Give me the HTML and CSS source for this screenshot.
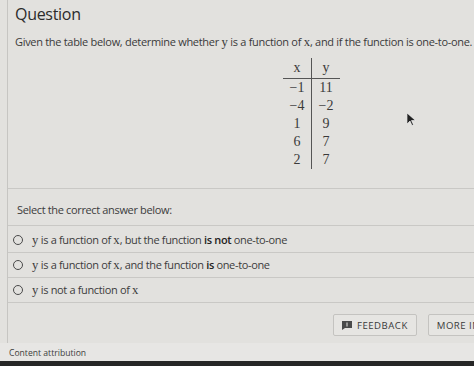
FILE: index.html
```html
<!DOCTYPE html>
<html lang="en">
<head>
    <meta charset="UTF-8">
    <title>Question</title>
    <link rel="stylesheet" href="styles.css">
</head>
<body>
    <div class="frame">
        <h1 class="title">Question</h1>
        <p class="prompt">Given the table below, determine whether <span class="math">y</span> is a function of <span class="math">x</span>, and if the function is one-to-one.</p>

        <div class="table-wrap">
            <table class="values">
                <tr><th>x</th><th>y</th></tr>
                <tr><td>&minus;1</td><td>11</td></tr>
                <tr><td>&minus;4</td><td>&minus;2</td></tr>
                <tr><td>1</td><td>9</td></tr>
                <tr><td>6</td><td>7</td></tr>
                <tr><td>2</td><td>7</td></tr>
            </table>
        </div>

        <div class="answers">
            <p class="select">Select the correct answer below:</p>
            <label class="option"><span class="radio"></span><span><span class="math">y</span> is a function of <span class="math">x</span>, but the function <b>is not</b> one-to-one</span></label>
            <label class="option"><span class="radio"></span><span><span class="math">y</span> is a function of <span class="math">x</span>, and the function <b>is</b> one-to-one</span></label>
            <label class="option"><span class="radio"></span><span><span class="math">y</span> is not a function of <span class="math">x</span></span></label>
        </div>

        <div class="actions">
            <button class="btn">
                <svg width="10" height="9" viewBox="0 0 10 9"><path d="M0 0h10v7H3L0 9z" fill="#4a4a4a"/><rect x="4.5" y="1.5" width="1" height="4" fill="#e6e5e2"/></svg>
                FEEDBACK
            </button>
            <button class="btn">MORE INFO</button>
        </div>
    </div>
    <footer class="attribution">Content attribution</footer>
    <div class="screen-edge"></div>

    <svg class="cursor" width="9" height="13" viewBox="0 0 9 13"><path d="M0 0v11l3-3 2 4.5 1.5-.7-2-4.3H8.5z" fill="#222" stroke="#fff" stroke-width=".6"/></svg>
</body>
</html>
```

FILE: styles.css
```css
body {
    margin: 0;
    width: 474px;
    height: 366px;
    overflow: hidden;
    background-color: #e2e1de;
    font-family: 'Open Sans', sans-serif;
    color: #333;
    position: relative;
}

.frame {
    margin-left: 7px;
    border-left: 1px solid #c6c5c2;
    height: 343px;
    width: 520px;
}

.title {
    margin: 0;
    padding: 3px 0 0 7px;
    font-size: 16px;
    font-weight: 400;
    letter-spacing: -0.3px;
    line-height: 22px;
    color: #2b2b2b;
}

.prompt {
    margin: 9px 0 0 7px;
    font-size: 11px;
    letter-spacing: -0.3px;
    line-height: 16px;
    white-space: nowrap;
    color: #3a3a3a;
}

.math {
    font-family: 'Liberation Serif', serif;
    font-size: 1.15em;
    letter-spacing: 0;
}

.table-wrap {
    padding: 8px 0 0 275px;
    height: 130px;
    border-bottom: 1px solid #c9c8c5;
}

.values {
    border-collapse: collapse;
    font-family: 'Liberation Serif', serif;
    font-size: 14px;
    color: #3a3a3a;
}

.values th {
    font-weight: 400;
    height: 20px;
    border-bottom: 1px solid #555;
}

.values td, .values th {
    width: 28px;
    text-align: center;
    padding: 0;
}

.values td {
    height: 18px;
}

.values td:first-child, .values th:first-child {
    border-right: 1px solid #555;
}

.answers {
    font-size: 11px;
    letter-spacing: -0.35px;
    color: #3c3c3c;
}

.select {
    margin: 0;
    padding: 13px 0 0 9px;
    height: 23px;
    line-height: 16px;
    border-bottom: 1px solid #c9c8c5;
}

.option {
    display: flex;
    align-items: center;
    gap: 9px;
    height: 24px;
    padding-left: 5px;
    border-bottom: 1px solid #c9c8c5;
}

.option:first-of-type {
    padding-top: 2px;
}

.option b {
    font-weight: 600;
    color: #222;
}

.radio {
    width: 8px;
    height: 8px;
    border: 1.6px solid #4a4a4a;
    border-radius: 50%;
    flex: none;
}

.actions {
    display: flex;
    gap: 11px;
    padding: 11px 0 0 325px;
}

.btn {
    display: flex;
    align-items: center;
    gap: 5px;
    height: 22px;
    padding: 0 8px;
    background-color: #e6e5e2;
    border: 1px solid #c4c3c0;
    border-radius: 2px;
    font-family: 'Open Sans', sans-serif;
    font-size: 9.6px;
    letter-spacing: 0.5px;
    color: #3a3a3a;
    white-space: nowrap;
}

.attribution {
    height: 18px;
    padding: 4px 0 0 9px;
    box-sizing: border-box;
    background-color: #e7e6e4;
    font-size: 8.6px;
    color: #3c3c3c;
}

.screen-edge {
    height: 5px;
    background-color: #262626;
}

.cursor {
    position: absolute;
    left: 407px;
    top: 113px;
}
```
